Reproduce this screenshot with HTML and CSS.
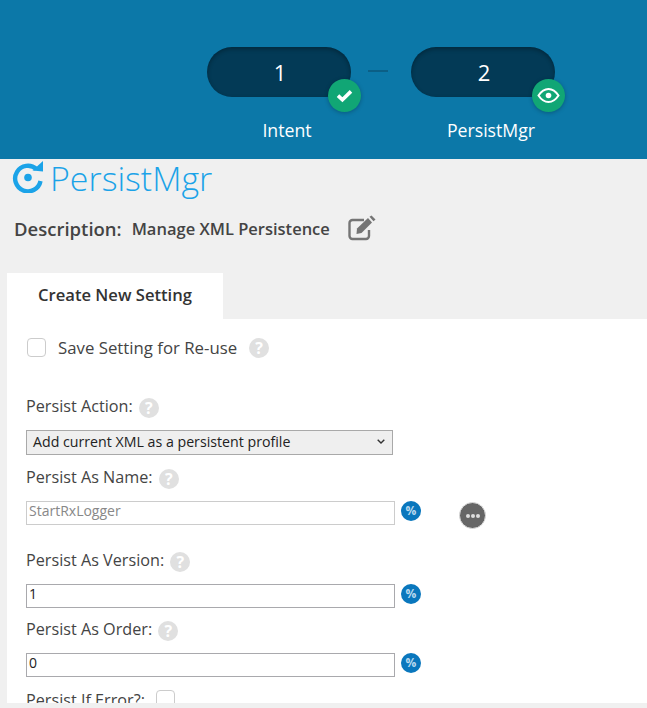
FILE: index.html
```html
<!DOCTYPE html>
<html lang="en">
<head>
    <meta charset="UTF-8">
    <title>PersistMgr</title>
    <link rel="stylesheet" href="styles.css">
</head>
<body>
<div class="wizard">
    <div class="step">
        <div class="pill">1
            <span class="badge">
                <svg width="19" height="17" viewBox="0 0 19 17"><path d="M3 8.6 L7.4 12.8 L16 4.4" fill="none" stroke="#fff" stroke-width="3.6"/></svg>
            </span>
        </div>
        <div class="step-label">Intent</div>
    </div>
    <div class="connector"></div>
    <div class="step">
        <div class="pill">2
            <span class="badge">
                <svg width="23" height="15" viewBox="0 0 23 15"><path d="M1.5 7.5 C5 2.2 8 1 11.5 1 C15 1 18 2.2 21.5 7.5 C18 12.8 15 14 11.5 14 C8 14 5 12.8 1.5 7.5 Z" fill="none" stroke="#fff" stroke-width="2"/><circle cx="11.5" cy="7.5" r="2.8" fill="#fff"/></svg>
            </span>
        </div>
        <div class="step-label">PersistMgr</div>
    </div>
</div>

<div class="content">
    <div class="title-row">
        <svg class="logo" width="33" height="34" viewBox="0 0 33 34">
            <path d="M25.5 10 A12.8 12.8 0 1 0 29.5 22" fill="none" stroke="#1ba3e8" stroke-width="4.4"/>
            <path d="M21.5 11.5 L32 12.5 L32 2 Z" fill="#1ba3e8"/>
            <circle cx="17" cy="18.5" r="3.8" fill="#1ba3e8"/>
        </svg>
        <span class="title">PersistMgr</span>
    </div>
    <div class="desc-row">
        <span class="desc-label">Description:</span>
        <span class="desc-text">Manage XML Persistence</span>
        <svg class="edit" width="30" height="26" viewBox="0 0 30 26">
            <path d="M17 5 H5.5 A3 3 0 0 0 2.5 8 V21 A3 3 0 0 0 5.5 24 H19 A3 3 0 0 0 22 21 V15" fill="none" stroke="#757575" stroke-width="2.4"/>
            <path d="M10 13.5 L21 3 L25 7.5 L14.5 18 L9.5 19 Z" fill="#757575"/>
            <path d="M22.5 1.8 L24.5 0.5 L28.5 4.5 L26.5 6.2 Z" fill="#757575"/>
        </svg>
    </div>

    <div class="tabs">
        <div class="tab">Create New Setting</div>
    </div>

    <div class="panel">
        <div class="save-row">
            <span class="check"></span>
            <span class="save-label">Save Setting for Re-use</span>
            <span class="help">?</span>
        </div>

        <div class="label first">Persist Action: <span class="help">?</span></div>
        <div class="select">Add current XML as a persistent profile
            <svg width="8" height="5" viewBox="0 0 8 5"><path d="M0.7 0.7 L4 4 L7.3 0.7" fill="none" stroke="#333" stroke-width="1.4"/></svg>
        </div>

        <div class="label name">Persist As Name: <span class="help">?</span></div>
        <div class="field-row">
            <div class="input disabled">StartRxLogger</div>
            <span class="pct">%</span>
            <span class="more"><i></i><i></i><i></i></span>
        </div>

        <div class="label version">Persist As Version: <span class="help">?</span></div>
        <div class="field-row">
            <div class="input">1</div>
            <span class="pct">%</span>
        </div>

        <div class="label order">Persist As Order: <span class="help">?</span></div>
        <div class="field-row">
            <div class="input">0</div>
            <span class="pct">%</span>
        </div>

        <div class="label error">Persist If Error?: <span class="check small"></span></div>
    </div>
</div>
</body>
</html>
```

FILE: styles.css
```css
html, body {
    margin: 0;
    height: 708px;
    overflow: hidden;
}

body {
    font-family: "Open Sans", Arial, sans-serif;
    background: #f0f0f0;
    color: #444;
}

.wizard {
    height: 159px;
    box-sizing: border-box;
    padding: 47px 0 0 207px;
    background: #0c78a8;
    display: flex;
}

.step {
    width: 160px;
}

.pill {
    position: relative;
    box-sizing: border-box;
    width: 144px;
    height: 50px;
    padding-left: 2px;
    border-radius: 25px;
    background: #033a56;
    box-shadow: inset 0 2px 4px rgba(0, 0, 0, 0.3);
    color: #fff;
    font-size: 22px;
    line-height: 50px;
    text-align: center;
}

.badge {
    position: absolute;
    right: -10px;
    bottom: -15px;
    width: 33px;
    height: 33px;
    border-radius: 50%;
    background: #11a675;
    box-shadow: 0 1px 4px rgba(0, 0, 0, 0.25);
    display: flex;
    align-items: center;
    justify-content: center;
}

.step-label {
    margin-top: 22px;
    color: #fff;
    font-size: 17.7px;
    line-height: 22px;
    text-align: center;
}

.connector {
    width: 20px;
    height: 2px;
    margin: 23px 23px 0 1px;
    background: #0b5f86;
}

.title-row {
    height: 41px;
    padding-left: 11px;
    display: flex;
    align-items: flex-start;
}

.logo {
    margin-right: 6px;
}

.title {
    color: #1ba3e8;
    font-size: 33.9px;
    font-weight: 300;
    line-height: 38px;
}

.desc-row {
    height: 56px;
    padding-left: 14px;
    display: flex;
    align-items: center;
}

.desc-label {
    font-size: 18.5px;
    font-weight: 600;
    margin-right: 10px;
}

.desc-text {
    font-size: 16.5px;
    font-weight: 600;
    margin-right: 17px;
}

.tabs {
    margin-top: 17px;
    padding-left: 7px;
}

.tab {
    width: 216px;
    height: 46px;
    background: #fff;
    color: #333;
    font-size: 16.6px;
    font-weight: 600;
    line-height: 44px;
    text-align: center;
}

.panel {
    margin-left: 7px;
    height: 384px;
    padding-left: 19px;
    background: #fff;
    overflow: hidden;
}

.save-row {
    height: 57px;
    display: flex;
    align-items: center;
}

.check {
    display: inline-block;
    box-sizing: border-box;
    width: 19px;
    height: 19px;
    margin-left: 1px;
    border: 1px solid #ccc;
    border-radius: 4px;
    background: #fff;
}

.check.small {
    vertical-align: -3px;
    margin-left: 7px;
}

.save-label {
    margin: 0 12px;
    font-size: 16.8px;
}

.help {
    display: inline-block;
    width: 20px;
    height: 20px;
    margin-left: 2px;
    border-radius: 50%;
    background: #e0e0e0;
    color: #fff;
    font-size: 16px;
    font-weight: 700;
    line-height: 20px;
    text-align: center;
    vertical-align: -2px;
}

.save-row .help {
    margin-left: 0;
}

.label {
    height: 22px;
    font-size: 16.2px;
    line-height: 22px;
}

.label.first {
    margin-top: 19px;
}

.select {
    box-sizing: border-box;
    width: 367px;
    height: 25px;
    margin-top: 13px;
    padding: 0 7px 2px 6px;
    border: 1px solid #a9a9a9;
    background: #efefef;
    color: #222;
    font-size: 14.2px;
    line-height: 22px;
    display: flex;
    align-items: center;
    justify-content: space-between;
}

.label.name {
    margin-top: 11px;
}

.field-row {
    display: flex;
    align-items: flex-start;
    margin-top: 13px;
}

.input {
    box-sizing: border-box;
    width: 369px;
    height: 24px;
    padding-left: 2px;
    border: 1px solid #a9a9ad;
    color: #222;
    font-size: 14px;
    line-height: 18px;
}

.input.disabled {
    border-color: #ccc;
    color: #888;
}

.pct {
    width: 20px;
    height: 20px;
    margin-left: 6px;
    border-radius: 50%;
    background: #0a77bd;
    color: #b9d9ee;
    font-size: 12px;
    font-weight: 700;
    line-height: 20px;
    text-align: center;
}

.more {
    box-sizing: border-box;
    width: 27px;
    height: 27px;
    margin: 1px 0 0 38px;
    border: 1px solid #ddd;
    border-radius: 50%;
    background: #666;
    display: flex;
    align-items: center;
    justify-content: center;
    gap: 1px;
}

.more i {
    width: 4px;
    height: 4px;
    border-radius: 50%;
    background: #ddd;
}

.label.version {
    margin-top: 20px;
}

.label.order {
    margin-top: 10px;
}

.label.error {
    margin-top: 12px;
}
```
